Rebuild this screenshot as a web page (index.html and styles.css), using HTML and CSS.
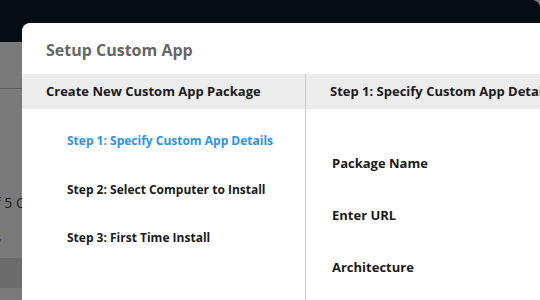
FILE: index.html
```html
<!DOCTYPE html>
<html>
<head>
<meta charset="utf-8">
<link rel="stylesheet" href="styles.css">
</head>
<body>
<div class="page">
  <div class="topbar"></div>
  <div class="content">
    <div class="rule"></div>
    <div class="frag">f 5 C</div>
    <div class="frag-blue">s</div>
    <div class="band"></div>
  </div>
</div>
<div class="modal">
  <h1 class="title">Setup Custom App</h1>
  <div class="body">
    <div class="left">
      <div class="head">Create New Custom App Package</div>
      <ul class="steps">
        <li class="step active">Step 1: Specify Custom App Details</li>
        <li class="step">Step 2: Select Computer to Install</li>
        <li class="step">Step 3: First Time Install</li>
      </ul>
    </div>
    <div class="right">
      <div class="head">Step 1: Specify Custom App Details</div>
      <div class="fields">
        <div class="label">Package Name</div>
        <div class="label">Enter URL</div>
        <div class="label">Architecture</div>
      </div>
    </div>
  </div>
</div>
</body>
</html>
```
FILE: styles.css
```css
html, body {
  margin: 0;
  padding: 0;
  width: 540px;
  height: 300px;
  overflow: hidden;
  font-family: "Open Sans", "Noto Sans", sans-serif;
}
body {
  position: relative;
  background: #7a7a7a;
}
.page {
  display: flex;
  flex-direction: column;
  height: 300px;
}
.topbar {
  height: 42px;
  background: #070b14;
  border-top-right-radius: 8px;
}
.content {
  flex: 1;
  display: flex;
  flex-direction: column;
  background: #7a7a7a;
}
.rule {
  margin-top: 46px;
  height: 1px;
  background: #5e5e5e;
}
.frag {
  margin-top: 105px;
  margin-left: -4px;
  font-size: 14px;
  color: #1c1c1c;
  line-height: 18px;
}
.frag-blue {
  margin-top: 17px;
  margin-left: -5px;
  font-size: 13px;
  color: #1d4f80;
  line-height: 16px;
}
.band {
  margin-top: 13px;
  height: 30px;
  background: #6c6c6c;
}
.modal {
  position: absolute;
  left: 22px;
  top: 23px;
  width: 518px;
  height: 277px;
  overflow: hidden;
  background: #fff;
  border-top-left-radius: 8px;
  display: flex;
  flex-direction: column;
}
.title {
  margin: 0;
  padding: 15px 0 0 24px;
  box-sizing: border-box;
  height: 51px;
  font-size: 16px;
  font-weight: 700;
  color: #666;
  line-height: 24px;
}
.body {
  display: grid;
  grid-template-columns: 284px 1fr;
  flex: 1;
}
.left {
  border-right: 1px solid #cccccc;
}
.head {
  background: #ececec;
  height: 35px;
  line-height: 35px;
  font-size: 13px;
  font-weight: 700;
  color: #1a1a1a;
  padding-left: 24px;
  white-space: nowrap;
  overflow: hidden;
}
.right .head {
  padding-left: 24px;
}
.steps {
  list-style: none;
  margin: 0;
  padding: 23px 0 0 45px;
  display: flex;
  flex-direction: column;
  gap: 31.5px;
}
.step {
  font-size: 12px;
  font-weight: 700;
  color: #1a1a1a;
  line-height: 17px;
}
.step.active {
  color: #2b93f0;
}
.fields {
  padding: 45px 0 0 26px;
  display: flex;
  flex-direction: column;
  gap: 34px;
}
.label {
  font-size: 13px;
  font-weight: 700;
  color: #1a1a1a;
  line-height: 18px;
}
```
